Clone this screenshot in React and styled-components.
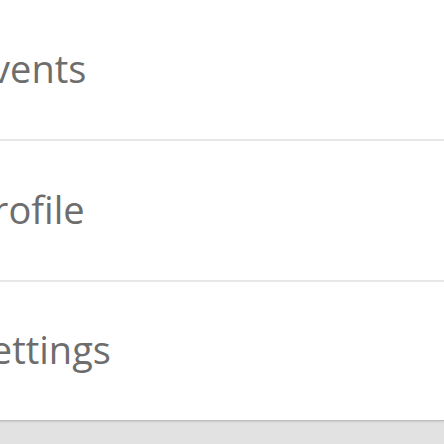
import React from 'react';
import styled, { createGlobalStyle } from 'styled-components';

const GlobalStyle = createGlobalStyle`
	html, body {
		margin: 0;
		padding: 0;
		height: 100%;
		overflow: hidden;
	}
	body {
		background: linear-gradient(#d6d6d6, #e2e2e2) fixed;
		font-family: "Open Sans", "Liberation Sans", sans-serif;
	}
`;

const items = [ "Events", "Profile", "Settings" ];

export default function App () {
	return (
		<>
			<GlobalStyle />
			<Menu>
				{ items.map( ( label ) => (
					<MenuItem key={ label }>
						<Label>{ label }</Label>
					</MenuItem>
				) ) }
			</Menu>
		</>
	);
}

const Menu = styled.ul`
	list-style: none;
	margin: 0;
	padding: 0;
	background: #ffffff;
	border-bottom: 1px solid #bcbcbc;
	box-shadow: 0 1px 2px 0 #00000018;
`;

const MenuItem = styled.li`
	display: flex;
	align-items: center;
	height: 139px;
	border-bottom: 2px solid #e7e7e7;

	&:last-child {
		height: 138px;
		border-bottom: none;
	}
`;

const Label = styled.span`
	margin: 0 0 4px -30px;
	font-size: 38px;
	color: #6d6d6d;
	line-height: 1;
	white-space: nowrap;
`;
